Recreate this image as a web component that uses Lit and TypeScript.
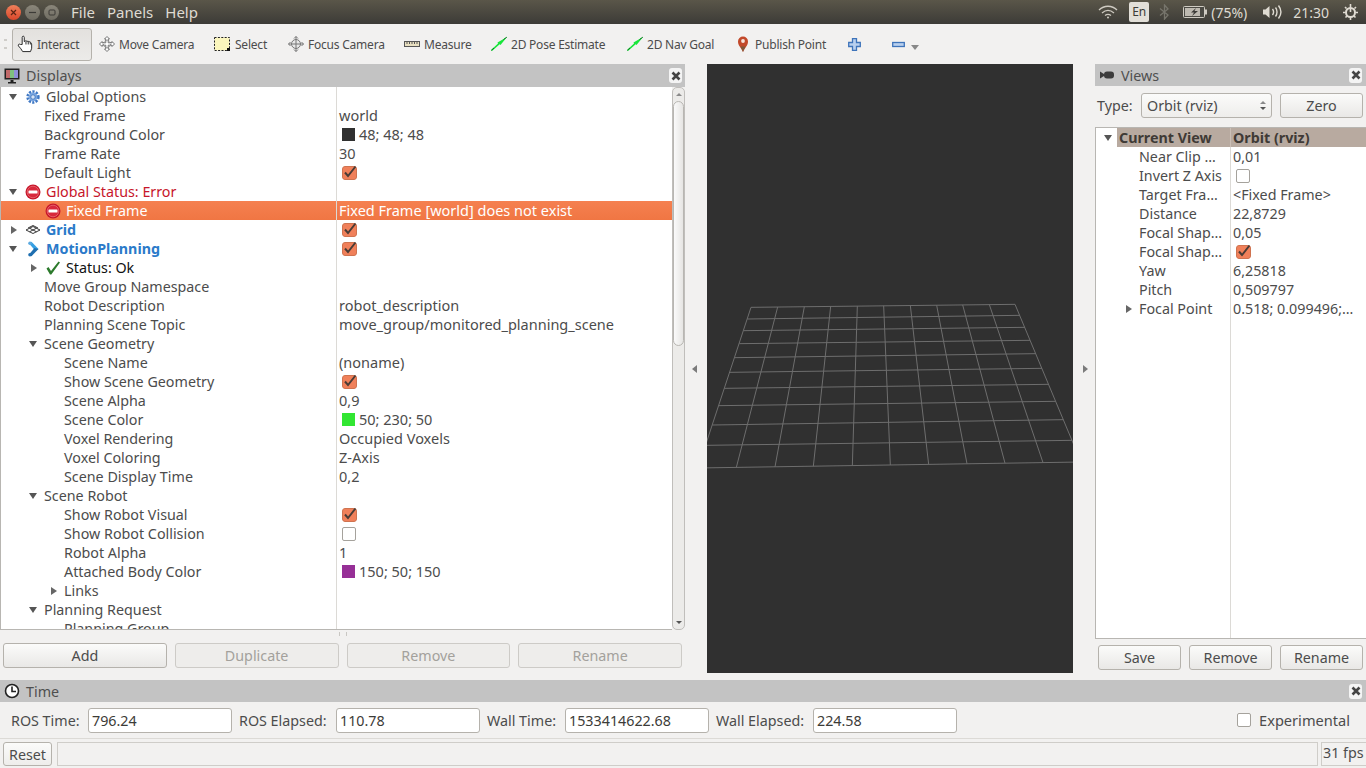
import { LitElement, html, css, svg, nothing } from 'lit'
import { customElement } from 'lit/decorators.js'

type Row = {
  name: string
  depth: number
  arrow?: 'down' | 'right'
  icon?: unknown
  value?: string
  swatch?: string
  check?: boolean
  kind?: 'error' | 'selected' | 'display' | 'ok' | 'head'
}

const errorIcon = svg`<svg class="ic" viewBox="0 0 16 16"><circle cx="8" cy="8" r="7.5" fill="#c7162b"/><circle cx="8" cy="8" r="5.8" fill="#d8283c" stroke="#f08a8a" stroke-width=".6"/><rect x="3.5" y="6.5" width="9" height="3" rx=".6" fill="#fff"/></svg>`
const gearIcon = svg`<svg class="ic" viewBox="0 0 16 16"><circle cx="8" cy="8" r="5" fill="none" stroke="#3f78c4" stroke-width="3.4" stroke-dasharray="2 1.2"/><circle cx="8" cy="8" r="4.4" fill="#7aa6e0"/><circle cx="8" cy="8" r="2.2" fill="#d5e4f7" stroke="#2e66b0" stroke-width=".7"/></svg>`
const gridIcon = svg`<svg class="ic" viewBox="0 0 16 16" fill="none" stroke="#3a3a3a" stroke-width="1"><path d="M1 8 8 4.5 15 8 8 11.5Z"/><path d="M4.5 6.2 11.5 9.8M11.5 6.2 4.5 9.8"/><path d="M3 6 8 3.5 13 6"/></svg>`
const planningIcon = svg`<svg class="ic" viewBox="0 0 16 16"><path d="M4 2.5 6.5.8 13.5 8 10.5 10Z" fill="#35a0e4"/><path d="M13.5 8 6.5 15.2 4 13.5 9.5 7Z" fill="#1f6fb0"/><circle cx="5" cy="2.2" r="1.8" fill="#5aa9e0"/><circle cx="5" cy="13.8" r="1.8" fill="#1f6fb0"/></svg>`
const okIcon = svg`<svg class="ic" viewBox="0 0 16 16"><path d="M1.5 8.5 3.5 7 6 11 13.5 1.5 15 2.5 6.3 14.5H5Z" fill="#2c7a2c"/></svg>`
const arrow2d = svg`<svg class="ic" viewBox="0 0 16 16"><path d="M0 14 7 7.6 6.5 6.6 16 1 9.5 9 8.7 8.2 1 15Z" fill="#18e63a"/><path d="M.3 14.4 3 12M15.8 1.2 12.5 3.5" stroke="#0b7a20" fill="none"/></svg>`

const displayRows: Row[] = [
  { name: 'Global Options', depth: 0, arrow: 'down', icon: gearIcon },
  { name: 'Fixed Frame', depth: 1, value: 'world' },
  { name: 'Background Color', depth: 1, swatch: '#303030', value: '48; 48; 48' },
  { name: 'Frame Rate', depth: 1, value: '30' },
  { name: 'Default Light', depth: 1, check: true },
  { name: 'Global Status: Error', depth: 0, arrow: 'down', icon: errorIcon, kind: 'error' },
  { name: 'Fixed Frame', depth: 1, icon: errorIcon, kind: 'selected', value: 'Fixed Frame [world] does not exist' },
  { name: 'Grid', depth: 0, arrow: 'right', icon: gridIcon, kind: 'display', check: true },
  { name: 'MotionPlanning', depth: 0, arrow: 'down', icon: planningIcon, kind: 'display', check: true },
  { name: 'Status: Ok', depth: 1, arrow: 'right', icon: okIcon, kind: 'ok' },
  { name: 'Move Group Namespace', depth: 1 },
  { name: 'Robot Description', depth: 1, value: 'robot_description' },
  { name: 'Planning Scene Topic', depth: 1, value: 'move_group/monitored_planning_scene' },
  { name: 'Scene Geometry', depth: 1, arrow: 'down' },
  { name: 'Scene Name', depth: 2, value: '(noname)' },
  { name: 'Show Scene Geometry', depth: 2, check: true },
  { name: 'Scene Alpha', depth: 2, value: '0,9' },
  { name: 'Scene Color', depth: 2, swatch: '#32e632', value: '50; 230; 50' },
  { name: 'Voxel Rendering', depth: 2, value: 'Occupied Voxels' },
  { name: 'Voxel Coloring', depth: 2, value: 'Z-Axis' },
  { name: 'Scene Display Time', depth: 2, value: '0,2' },
  { name: 'Scene Robot', depth: 1, arrow: 'down' },
  { name: 'Show Robot Visual', depth: 2, check: true },
  { name: 'Show Robot Collision', depth: 2, check: false },
  { name: 'Robot Alpha', depth: 2, value: '1' },
  { name: 'Attached Body Color', depth: 2, swatch: '#962f96', value: '150; 50; 150' },
  { name: 'Links', depth: 2, arrow: 'right' },
  { name: 'Planning Request', depth: 1, arrow: 'down' },
  { name: 'Planning Group', depth: 2 },
]

const viewRows: Row[] = [
  { name: 'Current View', depth: 0, arrow: 'down', kind: 'head', value: 'Orbit (rviz)' },
  { name: 'Near Clip …', depth: 1, value: '0,01' },
  { name: 'Invert Z Axis', depth: 1, check: false },
  { name: 'Target Fra…', depth: 1, value: '<Fixed Frame>' },
  { name: 'Distance', depth: 1, value: '22,8729' },
  { name: 'Focal Shap…', depth: 1, value: '0,05' },
  { name: 'Focal Shap…', depth: 1, check: true },
  { name: 'Yaw', depth: 1, value: '6,25818' },
  { name: 'Pitch', depth: 1, value: '0,509797' },
  { name: 'Focal Point', depth: 1, arrow: 'right', value: '0.518; 0.099496;…' },
]

const tools: { label: string; icon: unknown }[] = [
  {
    label: 'Move Camera',
    icon: svg`<svg class="ic" viewBox="0 0 16 16" fill="#fff" stroke="#666" stroke-width=".9"><path d="M8 .5 10.5 3H9.2V6.8H13V5.5L15.5 8 13 10.5V9.2H9.2V13H10.5L8 15.5 5.5 13H6.8V9.2H3V10.5L.5 8 3 5.5V6.8H6.8V3H5.5Z"/><circle cx="8" cy="8" r="3.6" fill="none" stroke-dasharray="1 1"/></svg>`,
  },
  {
    label: 'Select',
    icon: svg`<svg class="ic wide" viewBox="0 0 17 16"><rect x=".5" y="1.5" width="15" height="13" fill="#fbf6bd" stroke="#222" stroke-dasharray="2 1.4"/><path d="M13 12H16V15H13Z" fill="#111"/></svg>`,
  },
  {
    label: 'Focus Camera',
    icon: svg`<svg class="ic" viewBox="0 0 16 16" fill="none" stroke="#777"><circle cx="8" cy="8" r="4.5" fill="#e8e8e8"/><path d="M8 .5V15.5M.5 8H15.5M6 2.5 8 .5 10 2.5M6 13.5 8 15.5 10 13.5M2.5 6 .5 8 2.5 10M13.5 6 15.5 8 13.5 10"/></svg>`,
  },
  {
    label: 'Measure',
    icon: svg`<svg class="ic" viewBox="0 0 16 16"><rect x=".5" y="5.5" width="15" height="5" fill="#e8dfc0" stroke="#555"/><path d="M3 6V8M5.5 6V8M8 6V8M10.5 6V8M13 6V8" stroke="#555"/></svg>`,
  },
  { label: '2D Pose Estimate', icon: arrow2d },
  { label: '2D Nav Goal', icon: arrow2d },
  {
    label: 'Publish Point',
    icon: svg`<svg class="ic" viewBox="0 0 16 16"><path d="M8 16C6 11.5 3 9.5 3 5.5A5 5 0 0 1 13 5.5C13 9.5 10 11.5 8 16Z" fill="#c2492a"/><path d="M8 16C7 13 6 12 5.5 10.5H10.5C10 12 9 13 8 16Z" fill="#7c5a3c"/><circle cx="8" cy="5" r="1.9" fill="#f6e4dc"/></svg>`,
  },
  {
    label: '',
    icon: svg`<svg class="ic sm" viewBox="1.5 1.5 13 13"><path d="M6 2.2H10V6H13.8V10H10V13.8H6V10H2.2V6H6Z" fill="#b9d0ee" stroke="#3f74ba" stroke-width="1.3"/></svg>`,
  },
  {
    label: '',
    icon: svg`<svg class="ic sm" viewBox="1.5 1.5 13 13"><rect x="2.2" y="6" width="11.6" height="4" fill="#b9d0ee" stroke="#3f74ba" stroke-width="1.3"/></svg>`,
  },
]

const closeButton = html`<span class="close"
  ><svg viewBox="0 0 10 10" width="10" height="10"><path d="M1.5 1.5 8.5 8.5M8.5 1.5 1.5 8.5" stroke="#444" stroke-width="2.6"/></svg></span
>`

// grid corners measured off the reference, local to the 3D pane
const P = (zx: number, zy: number) => [zx / 3 - 7, zy / 3 + 226] as const
const topEnds = [153, 233, 313, 392, 472, 551, 631, 710, 788, 868, 945].map((x, i) => P(x, 52 - i * 0.9))
const bottomEnds = [-6, 109, 225, 340, 457, 571, 686, 801, 915, 1029, 1143].map((x, i) => P(x, 534 - i * 1.8))
const leftEnds = [
  [153, 52], [142, 87], [131, 122], [118, 161], [104, 203], [89, 247], [73, 295], [56, 347], [37, 405], [17, 466], [-6, 534],
].map(([x, y]) => P(x, y))
const rightEnds = [
  [945, 43], [960, 76], [975, 112], [990, 151], [1007, 191], [1026, 235], [1046, 283], [1067, 334], [1090, 389], [1117, 451], [1143, 516],
].map(([x, y]) => P(x, y))

@customElement('app-root')
export class AppRoot extends LitElement {
  static styles = css`
    :host {
      display: flex;
      flex-direction: column;
      width: 1366px;
      height: 768px;
      overflow: hidden;
      background: #f2f1f0;
      color: #4c4c4c;
      font: 14.3px/19px 'Noto Sans', sans-serif;
    }

    .ic {
      width: 16px;
      height: 16px;
      flex: none;
      display: block;
    }
    .ic.wide {
      width: 17px;
    }
    .ic.sm {
      width: 13px;
      height: 13px;
    }

    /* unity top bar */
    .top {
      height: 24px;
      flex: none;
      display: flex;
      align-items: center;
      background: linear-gradient(#5a5649, #3c3b37);
      color: #dfdbd2;
      font-size: 14px;
    }
    .wbtn {
      width: 15px;
      height: 15px;
      border-radius: 50%;
      margin-left: 4px;
      background: linear-gradient(#8a867a, #6f6c62);
      display: flex;
      align-items: center;
      justify-content: center;
    }
    .wbtn.red {
      margin-left: 6px;
      background: linear-gradient(#f0805a, #d9472b);
    }
    .menu {
      margin-left: 12px;
      display: flex;
      gap: 12px;
      font-size: 15px;
    }
    .tray {
      margin-left: auto;
      display: flex;
      align-items: center;
    }
    .en {
      width: 20px;
      height: 20px;
      background: #e2dfd8;
      color: #3c3b37;
      font-size: 12px;
      text-align: center;
      border-radius: 2px;
      margin: 0 10px 0 11px;
    }
    .batt {
      margin: 0 4px 0 13px;
    }
    .speaker {
      margin-left: 13px;
    }
    .clock {
      margin: 0 14px 0 11px;
    }
    .power {
      margin-right: 8px;
    }
    .pct {
      width: 38px;
    }

    /* toolbar */
    .toolbar {
      height: 40px;
      flex: none;
      display: grid;
      grid-template-columns: 12px 87px 115px 74px 116px 87px 136px 108px 113px 44px 19px 10px;
      align-items: center;
      font-size: 12px;
      letter-spacing: -0.22px;
    }
    .grip {
      width: 3px;
      height: 6px;
      margin-left: 4px;
      border-top: 2px solid #cfcdc9;
      border-bottom: 2px solid #cfcdc9;
    }
    .tool {
      display: flex;
      align-items: center;
      gap: 4px;
    }
    .interact {
      width: 80px;
      height: 33px;
      box-sizing: border-box;
      border: 1px solid #b5b2ac;
      border-radius: 3px;
      background: linear-gradient(#e3e1de, #ecebe9);
      display: flex;
      align-items: center;
      gap: 3px;
      padding-left: 4px;
      line-height: 21px;
    }
    .more {
      width: 0;
      height: 0;
      margin-top: 6px;
      border: 4px solid transparent;
      border-top: 5px solid #888;
      border-bottom: 0;
    }

    /* main area */
    .main {
      height: 616px;
      flex: none;
      display: grid;
      grid-template-columns: 685px 22px 366px 22px 1fr;
    }
    .title {
      height: 22px;
      flex: none;
      display: flex;
      align-items: center;
      gap: 6px;
      padding: 0 4px 0 4px;
      background: #c3c3c3;
      color: #4f4f4f;
    }
    .title .close {
      margin-left: auto;
    }
    .close {
      width: 13px;
      height: 15px;
      background: #f4f4f4;
      border-radius: 3px;
      display: flex;
      align-items: center;
      justify-content: center;
    }
    .panel {
      display: flex;
      flex-direction: column;
      min-width: 0;
    }
    .displays .title {
      height: 23px;
      padding-right: 3px;
    }
    .split {
      display: flex;
      align-items: center;
      justify-content: center;
      height: 609px;
    }
    .tri-l,
    .tri-r {
      width: 0;
      height: 0;
      border: 4px solid transparent;
    }
    .tri-l {
      border-left: 0;
      border-right: 5px solid #7b7b7b;
      margin-right: 3px;
    }
    .tri-r {
      border-right: 0;
      border-left: 5px solid #7b7b7b;
      margin-left: 3px;
    }
    .scene {
      width: 366px;
      height: 609px;
      display: block;
      background: #303030;
    }

    /* property tree */
    .treewrap {
      height: 543px;
      flex: none;
      display: flex;
    }
    .tree {
      flex: 1;
      min-width: 0;
      overflow: hidden;
      background: #fff;
      border-left: 1px solid #b8b6b2;
      border-bottom: 1px solid #b8b6b2;
      box-sizing: border-box;
    }
    .row {
      height: 19px;
      display: grid;
      grid-template-columns: 336px 1fr;
      white-space: nowrap;
    }
    .name {
      display: flex;
      align-items: center;
      border-right: 1px solid #dcdad6;
      overflow: hidden;
    }
    .slot {
      width: 15px;
      flex: none;
      display: flex;
      justify-content: flex-start;
    }
    .icon {
      margin: 0 5px 0 1px;
      flex: none;
    }
    .value {
      display: flex;
      align-items: center;
      padding-left: 2px;
      overflow: hidden;
      font-size: 14.5px;
    }
    .down {
      width: 0;
      height: 0;
      margin: 1px 0 0 0;
      border: 4.5px solid transparent;
      border-top: 6px solid #555;
      border-bottom: 0;
    }
    .right {
      width: 0;
      height: 0;
      margin-left: 2px;
      border: 4px solid transparent;
      border-left: 6px solid #666;
      border-right: 0;
    }
    .swatch {
      width: 13px;
      height: 13px;
      margin: 0 4px 0 3px;
      flex: none;
    }
    .box {
      width: 14px;
      height: 14px;
      margin-left: 3px;
      box-sizing: border-box;
      border: 1px solid #a5a29c;
      border-radius: 2px;
      background: #fff;
      display: block;
    }
    .box.on {
      border: 0;
      width: 15px;
      height: 15px;
      background: none;
    }
    .error {
      color: #c7162b;
    }
    .display {
      color: #2a7ac9;
      font-weight: 700;
    }
    .ok {
      color: #111;
    }
    .selected {
      background: linear-gradient(#f58050, #f07643);
      color: #fff;
    }
    .head {
      background: linear-gradient(to right, #fff 21px, #b8aaa0 21px);
      color: #3f3a36;
      font-weight: 700;
    }

    .scroll {
      width: 13px;
      flex: none;
      display: flex;
      flex-direction: column;
      box-sizing: border-box;
      border: 1px solid #c0bebb;
      border-radius: 5px;
      background: #ecebe9;
      overflow: hidden;
    }
    .sb-end {
      height: 13px;
      flex: none;
      display: flex;
      align-items: center;
      justify-content: center;
    }
    .sb-up,
    .sb-dn {
      width: 0;
      height: 0;
      border: 3px solid transparent;
    }
    .sb-up {
      border-top: 0;
      border-bottom: 3px solid #8a8a8a;
    }
    .sb-dn {
      border-bottom: 0;
      border-top: 3px solid #555;
    }
    .thumb {
      height: 245px;
      flex: none;
      box-sizing: border-box;
      border: 1px solid #b8b6b2;
      border-radius: 6px;
      background: linear-gradient(to right, #fafafa, #e6e5e3);
    }
    .sb-fill {
      flex: 1;
    }
    .hsplit {
      height: 13px;
      flex: none;
      display: flex;
      justify-content: center;
    }
    .dots {
      width: 6px;
      height: 4px;
      margin-top: 2px;
      border-left: 1px solid #c9c7c3;
      border-right: 1px solid #c9c7c3;
    }
    .btns {
      display: grid;
      grid-template-columns: repeat(4, 1fr);
      gap: 8px;
      padding: 0 3px;
    }
    button {
      height: 25px;
      padding: 0;
      font: inherit;
      color: #4c4c4c;
      border: 1px solid #b5b2ac;
      border-radius: 3px;
      background: linear-gradient(#fbfbfa, #e9e8e6);
    }
    button:disabled {
      color: #a3a19c;
      background: #eeedeb;
      border-color: #cdcbc7;
    }

    /* views panel */
    .type {
      height: 41px;
      flex: none;
      display: grid;
      grid-template-columns: 44px 131px 91px;
      align-items: center;
      padding: 0 0 2px 2px;
      box-sizing: border-box;
    }
    .combo {
      height: 25px;
      box-sizing: border-box;
      border: 1px solid #b5b2ac;
      border-radius: 3px;
      background: linear-gradient(#fbfbfa, #eeedeb);
      display: flex;
      align-items: center;
      justify-content: space-between;
      padding: 0 5px;
    }
    .updown {
      display: flex;
      flex-direction: column;
      gap: 3px;
    }
    .type button {
      margin-left: 8px;
    }
    .vtree {
      height: 512px;
      flex: none;
      background: linear-gradient(#dcdad6, #dcdad6) 134px 0 / 1px 100% no-repeat #fff;
      border: 1px solid #b8b6b2;
      border-right: 0;
      box-sizing: border-box;
    }
    .vtree .row {
      grid-template-columns: 134px 1fr;
    }
    .vtree .name {
      border-right: 0;
    }
    .vtree .value {
      padding-left: 3px;
      font-size: 14.3px;
    }
    .vtree .head .value {
      padding-left: 2px;
      border-left: 1px solid #cbbfb6;
    }
    .vbtns {
      display: grid;
      grid-template-columns: 83px 83px 83px;
      gap: 8px;
      padding: 6px 3px 0;
    }

    /* time panel */
    .time {
      height: 58px;
      flex: none;
      display: flex;
      flex-direction: column;
    }
    .time .title {
      height: 22px;
    }
    .timerow {
      height: 36px;
      display: grid;
      grid-template-columns: 77px 151px 97px 151px 78px 151px 97px 144px 1fr;
      align-items: center;
      padding-left: 11px;
    }
    .tfield {
      width: 144px;
      height: 25px;
      box-sizing: border-box;
      border: 1px solid #b5b2ac;
      border-radius: 3px;
      background: #fff;
      padding: 2px 3px;
      color: #3c3b37;
    }
    .exp {
      justify-self: end;
      display: flex;
      align-items: center;
      gap: 8px;
      margin-right: 16px;
      font-size: 14.6px;
    }
    .exp .box {
      margin: 0;
    }

    /* status bar */
    .status {
      height: 30px;
      flex: none;
      display: flex;
      gap: 3px;
      padding: 3px 0 2px 3px;
      box-sizing: border-box;
      border-top: 1px solid #dcdad6;
    }
    .reset {
      width: 49px;
      height: 24px;
      align-self: center;
      background: linear-gradient(#fbfbfa, #eeedeb);
    }
    .sfield {
      flex: 1;
      margin-left: 2px;
      border: 1px solid #cfcdc9;
    }
    .fps {
      width: 45px;
      box-sizing: border-box;
      border: 1px solid #cfcdc9;
      border-right: 0;
      padding-left: 1px;
      white-space: nowrap;
      overflow: hidden;
    }
  `

  private checkbox(on: boolean) {
    if (!on) return html`<span class="box"></span>`
    return html`<svg class="box on" viewBox="0 0 15 15">
      <rect x=".5" y="1.5" width="14" height="13" rx="2.5" fill="#f0805a" stroke="#cf7350" />
      <path d="M3 7.5 6 11 13.5 1.5" fill="none" stroke="#4a3c36" stroke-width="2" />
    </svg>`
  }

  private treeRow(r: Row) {
    return html`<div class="row ${r.kind ?? ''}">
      <div class="name" style="padding-left:${r.depth * 20 + 8}px">
        <span class="slot">
          ${r.arrow ? html`<span class=${r.arrow}></span>` : nothing}
        </span>
        ${r.icon ? html`<span class="icon">${r.icon}</span>` : nothing}
        <span>${r.name}</span>
      </div>
      <div class="value">
        ${r.swatch ? html`<span class="swatch" style="background:${r.swatch}"></span>` : nothing}
        ${r.check !== undefined ? this.checkbox(r.check) : nothing}
        ${r.value ? html`<span>${r.value}</span>` : nothing}
      </div>
    </div>`
  }

  private renderTopBar() {
    return html`<div class="top">
      <span class="wbtn red">
        <svg width="7" height="7" viewBox="0 0 7 7"><path d="M1 1 6 6M6 1 1 6" stroke="#5a2415" stroke-width="1.2" /></svg>
      </span>
      <span class="wbtn"><svg width="7" height="7" viewBox="0 0 7 7"><path d="M0 3.5H7" stroke="#3c3b37" stroke-width="1.2" /></svg></span>
      <span class="wbtn"><svg width="8" height="7" viewBox="0 0 8 7"><rect x="1" y="1" width="6" height="5" rx="1" fill="none" stroke="#3c3b37" /></svg></span>
      <div class="menu"><span>File</span><span>Panels</span><span>Help</span></div>
      <div class="tray">
        <svg width="20" height="14" viewBox="0 0 20 14" fill="none" stroke="#cfcbc2" stroke-width="1.3">
          <path d="M1 5C6 0 14 0 19 5M4 8C8 4.5 12 4.5 16 8M7 10.5C9 9 11 9 13 10.5" />
          <circle cx="10" cy="12.5" r="1" fill="#cfcbc2" stroke="none" />
        </svg>
        <span class="en">En</span>
        <svg width="11" height="16" viewBox="0 0 11 16" fill="none" stroke="#77756c" stroke-width="1.3"><path d="M1 4.5 9 11 5.5 15V1L9 5 1 11.5" /></svg>
        <svg class="batt" width="24" height="12" viewBox="0 0 24 12">
          <rect x=".5" y=".5" width="21" height="11" rx="1" fill="#4b4a44" stroke="#cfcbc2" />
          <rect x="22" y="3.5" width="2" height="5" fill="#cfcbc2" />
          <rect x="2" y="2" width="15" height="8" fill="#bdb9b0" />
          <path d="M13 2 8 6.5H11L9 10 15 5H11.5Z" fill="#3c3b37" />
        </svg>
        <span class="pct">(75%)</span>
        <svg class="speaker" width="20" height="16" viewBox="0 0 20 16" fill="none" stroke="#dfdbd2" stroke-width="1.4">
          <path d="M1 5.5H3.5L7.5 2V14L3.5 10.5H1Z" fill="#dfdbd2" stroke="none" />
          <path d="M10.5 5C11.8 6.8 11.8 9.2 10.5 11M13.5 3.5C15.5 6 15.5 10 13.5 12.5M16.5 1.5C19.5 5.5 19.5 10.5 16.5 14.5" />
        </svg>
        <span class="clock">21:30</span>
        <svg class="power" width="15" height="16" viewBox="0 0 15 16" fill="none" stroke="#dfdbd2" stroke-width="2">
          <circle cx="7.5" cy="8.5" r="4.5" />
          <path d="M7.5 0V8M2 3 3.5 4.5M13 3 11.5 4.5M0 8.5H2.5M15 8.5H12.5M2.5 13.5 4 12M12.5 13.5 11 12M7.5 13V16" stroke-width="1.6" />
        </svg>
      </div>
    </div>`
  }

  private renderToolbar() {
    return html`<div class="toolbar">
      <span class="grip"></span>
      <div class="interact">
        <svg width="17" height="18" viewBox="0 0 17 19" fill="#fff" stroke="#222" stroke-width="1">
          <path d="M5 10V2.5C5 .8 7.2 .8 7.2 2.5V7L8.7 6.2 10.2 6.6 11.7 6.8 13.6 7.6C14.8 8.2 15 9 15 10.5V14L13.8 17.5H5.5L3.6 14.5 1 11.5C.3 10 2 9 3.2 10Z" />
          <path d="M9 7V10M11.4 7V10M13.6 8V10" />
        </svg>
        Interact
      </div>
      ${tools.map(t => html`<div class="tool">${t.icon}${t.label ? html`<span>${t.label}</span>` : nothing}</div>`)}
      <span class="more"></span>
    </div>`
  }

  private renderDisplays() {
    return html`<div class="panel displays">
      <div class="title">
        <svg class="ic" viewBox="0 0 16 16">
          <rect x=".5" y=".5" width="15" height="11" fill="#222" />
          <rect x="2" y="2" width="4" height="8" fill="#c26a6a" />
          <rect x="6" y="2" width="4" height="8" fill="#7fc07f" />
          <rect x="10" y="2" width="4" height="8" fill="#8f8fd8" />
          <path d="M6.5 12H9.5V14H12V15.5H4V14H6.5Z" fill="#222" />
        </svg>
        <span>Displays</span> ${closeButton}
      </div>
      <div class="treewrap">
        <div class="tree">${displayRows.map(r => this.treeRow(r))}</div>
        <div class="scroll">
          <div class="sb-end"><span class="sb-up"></span></div>
          <div class="thumb"></div>
          <div class="sb-fill"></div>
          <div class="sb-end"><span class="sb-dn"></span></div>
        </div>
      </div>
      <div class="hsplit"><span class="dots"></span></div>
      <div class="btns">
        <button>Add</button>
        <button disabled>Duplicate</button>
        <button disabled>Remove</button>
        <button disabled>Rename</button>
      </div>
    </div>`
  }

  private renderScene() {
    const line = (a: readonly number[], b: readonly number[]) =>
      svg`<line x1=${a[0]} y1=${a[1]} x2=${b[0]} y2=${b[1]} />`
    return html`<svg class="scene" viewBox="0 0 366 609" fill="none" stroke="#6e6e6e" stroke-width="1">
      ${topEnds.map((p, i) => line(p, bottomEnds[i]))} ${leftEnds.map((p, i) => line(p, rightEnds[i]))}
    </svg>`
  }

  private renderViews() {
    return html`<div class="panel">
      <div class="title">
        <svg class="ic" viewBox="0 0 16 16">
          <path d="M1 4.5 5 7V9L1 11.5Z" fill="#3c3c3c" />
          <rect x="5" y="4.5" width="10" height="7" rx="3" fill="#3c3c3c" />
        </svg>
        <span>Views</span> ${closeButton}
      </div>
      <div class="type">
        <span>Type:</span>
        <div class="combo">
          Orbit (rviz)
          <span class="updown"><span class="sb-up"></span><span class="sb-dn"></span></span>
        </div>
        <button>Zero</button>
      </div>
      <div class="vtree">
        ${viewRows.map(r => this.treeRow(r))}
      </div>
      <div class="vbtns">
        <button>Save</button>
        <button>Remove</button>
        <button>Rename</button>
      </div>
    </div>`
  }

  private renderTime() {
    const fields = [
      ['ROS Time:', '796.24'],
      ['ROS Elapsed:', '110.78'],
      ['Wall Time:', '1533414622.68'],
      ['Wall Elapsed:', '224.58'],
    ]
    return html`<div class="time">
      <div class="title">
        <svg class="ic" viewBox="0 0 16 16" fill="#fff" stroke="#222">
          <circle cx="8" cy="8" r="6.5" stroke-width="1.6" />
          <path d="M8 3.5V8.5H12" fill="none" stroke-width="1.6" />
        </svg>
        <span>Time</span> ${closeButton}
      </div>
      <div class="timerow">
        ${fields.map(([l, v]) => html`<span>${l}</span><span class="tfield">${v}</span>`)}
        <span class="exp"><span class="box"></span>Experimental</span>
      </div>
    </div>`
  }

  render() {
    return html`
      ${this.renderTopBar()} ${this.renderToolbar()}
      <div class="main">
        ${this.renderDisplays()}
        <div class="split"><span class="tri-l"></span></div>
        ${this.renderScene()}
        <div class="split"><span class="tri-r"></span></div>
        ${this.renderViews()}
      </div>
      ${this.renderTime()}
      <div class="status">
        <button class="reset">Reset</button>
        <div class="sfield"></div>
        <div class="fps">31 fps</div>
      </div>
    `
  }
}

declare global {
  interface HTMLElementTagNameMap {
    'app-root': AppRoot
  }
}
